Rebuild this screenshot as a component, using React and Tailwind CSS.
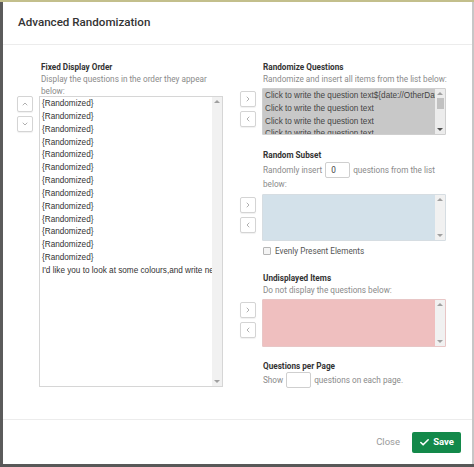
import { Check, ChevronUp, ChevronDown, ChevronLeft, ChevronRight } from 'lucide-react';

const ui = { fontFamily: 'Roboto, "Liberation Sans", sans-serif' };
const listFont = { fontFamily: '"Liberation Sans", Arial, sans-serif' };
const heading = "text-[8.2px] leading-[12px] font-bold text-[#333]";
const desc = "text-[8.2px] leading-[12px] text-[#8a8a8a]";

function MoveBtn({ icon: Icon }) {
  return (
    <button className="w-[16px] h-[16px] flex items-center justify-center bg-white border border-[#d4d4d4] rounded-[2px] shadow-[0_1px_1px_rgba(0,0,0,0.06)]">
      <Icon size={8} strokeWidth={2} className="text-[#888]" />
    </button>
  );
}

function Scroll({ thumb, track = 'bg-[#f1f1f1]' }) {
  return (
    <div className={`w-[10px] h-full flex flex-col items-center py-[3px] ${track}`}>
      <div className="w-0 h-0 border-l-[3px] border-r-[3px] border-b-[3px] border-l-transparent border-r-transparent border-b-[#a0a0a0]" />
      {thumb && <div className="w-[7px] h-[11px] mt-[3px] bg-[#c1c1c1]" />}
      <div className="flex-1" />
      <div className={`w-0 h-0 border-l-[3px] border-r-[3px] border-t-[3px] border-l-transparent border-r-transparent ${thumb ? 'border-t-[#505050]' : 'border-t-[#a0a0a0]'}`} />
    </div>
  );
}

function ListRow({ bg, children, scroll, h = 'h-[47px]', border = 'border-[#d9d9d9]' }) {
  return (
    <div className="flex gap-[6px]">
      <div className="w-[16px] flex flex-col gap-[4px] pt-[3px]">
        <MoveBtn icon={ChevronRight} />
        <MoveBtn icon={ChevronLeft} />
      </div>
      <div className={`w-[184px] ${h} ${bg} border ${border} flex rounded-[1px] overflow-hidden`}>
        <div style={listFont} className="flex-1 overflow-hidden pl-[2px] pt-[1px] text-[8.2px] leading-[12.8px] text-[#444] whitespace-nowrap">{children}</div>
        {scroll}
      </div>
    </div>
  );
}

function Modal() {
  const fixed = Array.from({ length: 13 }, () => '{Randomized}');
  return (
    <div className="flex-1 bg-white flex flex-col">
      {/* header */}
      <div className="h-[43px] shrink-0 flex items-center px-[15px] border-b border-[#ececec]">
        <h1 className="text-[11.6px] font-medium text-[#333]">Advanced Randomization</h1>
      </div>

      {/* body */}
      <div className="flex-1 flex pt-[14px] pl-[14px]">
        {/* left column */}
        <div className="w-[205px]">
          <div className="pl-[24px] pt-[2px] h-[37px]">
            <div className={heading}>Fixed Display Order</div>
            <div className={desc}>Display the questions in the order they appear below:</div>
          </div>
          <div className="flex gap-[6px]">
            <div className="w-[16px] flex flex-col gap-[4px]">
              <MoveBtn icon={ChevronUp} />
              <MoveBtn icon={ChevronDown} />
            </div>
            <div className="w-[184px] h-[291px] border border-[#d6d6d6] flex">
              <div style={listFont} className="flex-1 overflow-hidden pl-[2px] pt-[1px] text-[8.2px] leading-[12.85px] text-[#333] whitespace-nowrap">
                {fixed.map((t, i) => <div key={i}>{t}</div>)}
                <div>I'd like you to look at some colours,and write next</div>
              </div>
              <Scroll />
            </div>
          </div>
        </div>

        {/* right column */}
        <div className="ml-[18px] w-[206px]">
          <div className="pl-[23px] pt-[2px] h-[29px]">
            <div className={heading}>Randomize Questions</div>
            <div className={`${desc} whitespace-nowrap`}>Randomize and insert all items from the list below:</div>
          </div>
          <ListRow bg="bg-[#c8c8c8]" border="border-[#cfcfcf]" scroll={<Scroll thumb track="bg-[#ececec]" />}>
            <div>Click to write the question text${'{'}date://OtherDate</div>
            <div>Click to write the question text</div>
            <div>Click to write the question text</div>
            <div>Click to write the question text</div>
          </ListRow>

          <div className="pl-[23px] mt-[14px] h-[45px]">
            <div className={heading}>Random Subset</div>
            <div className={`${desc} flex items-center mt-[1px]`}>
              <span>Randomly insert</span>
              <span className="mx-[3px] w-[25px] h-[16px] border border-[#cfcfcf] rounded-[2px] flex items-center pl-[5px] text-[#444]">0</span>
              <span>questions from the list</span>
            </div>
            <div className={desc}>below:</div>
          </div>
          <ListRow bg="bg-[#d3e1ea]" border="border-[#d6dde2]" scroll={<Scroll />} />

          <div className="pl-[23px] mt-[4px] flex items-center gap-[4px] h-[12px]">
            <span className="w-[8px] h-[8px] border border-[#b5b5b5] bg-[#f4f4f4] rounded-[1px]" />
            <span className="text-[8.2px] text-[#555]">Evenly Present Elements</span>
          </div>

          <div className="pl-[23px] mt-[15px] h-[27px]">
            <div className={heading}>Undisplayed Items</div>
            <div className={desc}>Do not display the questions below:</div>
          </div>
          <ListRow bg="bg-[#efbfbf]" border="border-[#e8c6c6]" h="h-[48px]" scroll={<Scroll />} />

          <div className="pl-[23px] mt-[13px]">
            <div className={heading}>Questions per Page</div>
            <div className={`${desc} flex items-center`}>
              <span>Show</span>
              <span className="mx-[3px] w-[25px] h-[16px] border border-[#cfcfcf] rounded-[2px]" />
              <span>questions on each page.</span>
            </div>
          </div>
        </div>
      </div>

      {/* footer */}
      <div className="h-[45px] shrink-0 border-t border-[#ececec] flex items-center justify-end pr-[11px] gap-[12px]">
        <span className="text-[9.5px] text-[#9a9a9a]">Close</span>
        <button className="w-[49px] h-[21px] bg-[#13894a] rounded-[2px] flex items-center justify-center gap-[3px] text-white text-[9.5px] font-bold">
          <Check size={11} strokeWidth={3.5} />
          Save
        </button>
      </div>
    </div>
  );
}

export default function App() {
  return (
    <div style={ui} className="w-[474px] h-[467px] flex flex-col overflow-hidden bg-[#5b5b5b]">
      <div className="h-[2px] shrink-0 bg-[#c3bf8c]" />
      <div className="flex-1 flex">
        <div className="w-[3px] bg-[#5b5b5b]" />
        <Modal />
        <div className="w-[2px] bg-[#c7c7c7]" />
      </div>
      <div className="h-[3px] shrink-0 bg-[#585858]" />
    </div>
  );
}
